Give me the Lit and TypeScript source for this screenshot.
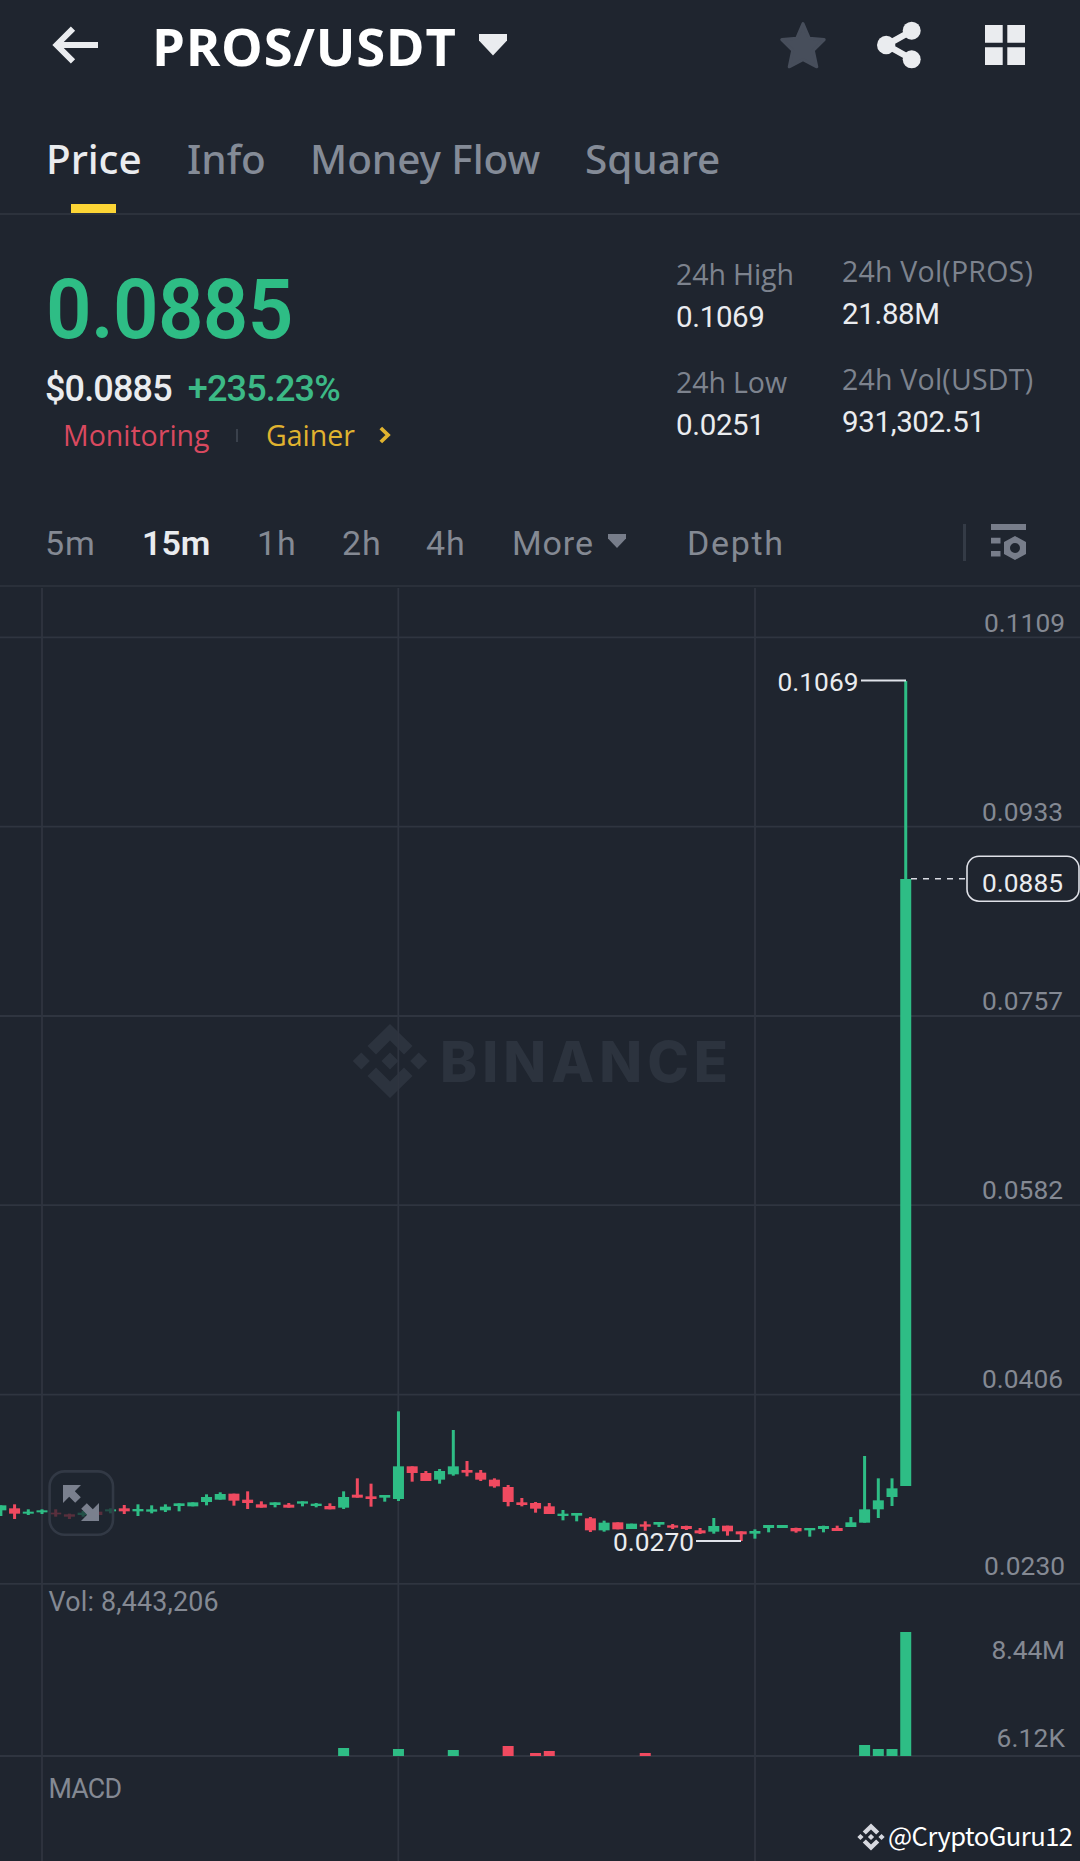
import { LitElement, html, css, svg } from "lit";
import { customElement, property } from "lit/decorators.js";
import { classMap } from "lit/directives/class-map.js";

type Candle = [up: number, high: number, top: number, bottom: number, low: number];

const FIRST_X = 0.87;
const STEP = 13.71;

// Vertical extents in thirds of a pixel below CANDLE_TOP.
const CANDLE_TOP = 1400;
const CANDLES: Candle[] = [
  [1, 316, 316, 331, 348], [0, 313, 325, 341, 357], [1, 328, 335, 341, 345], [1, 328, 331, 337, 342],
  [0, 328, 338, 343, 350], [0, 341, 343, 350, 357], [1, 333, 338, 345, 350], [0, 325, 335, 345, 350],
  [1, 325, 328, 334, 340], [0, 315, 325, 334, 342], [1, 313, 327, 334, 348], [1, 316, 328, 335, 340],
  [1, 313, 320, 331, 336], [1, 310, 310, 318, 334], [1, 307, 307, 319, 319], [1, 283, 291, 306, 316],
  [1, 277, 282, 299, 299], [0, 281, 281, 302, 317], [0, 274, 299, 309, 327], [0, 304, 313, 323, 323],
  [1, 307, 307, 315, 322], [0, 309, 314, 323, 323], [1, 304, 304, 311, 319], [1, 309, 311, 318, 322],
  [0, 310, 318, 328, 328], [1, 274, 291, 323, 327], [0, 235, 284, 293, 293], [0, 251, 289, 297, 320],
  [1, 285, 285, 293, 305], [1, 34, 199, 297, 303], [0, 199, 199, 219, 245], [0, 213, 219, 243, 243],
  [1, 207, 213, 239, 251], [1, 90, 199, 223, 227], [0, 183, 210, 218, 229], [0, 210, 218, 239, 243],
  [0, 235, 239, 259, 263], [0, 255, 261, 306, 319], [0, 294, 307, 315, 319], [0, 306, 309, 326, 338],
  [0, 309, 319, 342, 342], [1, 330, 341, 348, 361], [1, 339, 339, 347, 364], [0, 351, 355, 391, 396],
  [1, 362, 368, 391, 395], [0, 367, 367, 388, 388], [1, 371, 371, 387, 387], [0, 364, 373, 380, 392],
  [1, 366, 366, 374, 381], [0, 372, 376, 383, 387], [0, 377, 378, 387, 390], [0, 384, 391, 400, 402],
  [1, 354, 378, 395, 401], [0, 377, 377, 394, 407], [0, 394, 394, 403, 423], [1, 388, 393, 401, 416],
  [1, 375, 375, 384, 397], [1, 375, 375, 384, 384], [0, 383, 384, 394, 398], [1, 384, 384, 391, 410],
  [1, 377, 378, 387, 397], [0, 377, 384, 393, 393], [1, 351, 367, 381, 381], [1, 168, 328, 368, 368],
  [1, 235, 301, 328, 354], [1, 235, 265, 291, 318], [1, -2157, -1563, 258, 258],
];

// [candle index, height, rising]
const VOLUMES: [number, number, number][] = [
  [25, 8, 1], [29, 7, 1], [33, 6, 1], [37, 10, 0], [39, 3, 0], [40, 5, 0],
  [47, 3, 0], [63, 11, 1], [64, 7, 1], [65, 7, 1], [66, 124, 1],
];
const VOLUME_BASE = 1756;

const AXIS: [string, number, number, number][] = [
  ["0.1109", 985.5, 1063.5, 631.7], ["0.0933", 983.5, 1061.5, 820.7], ["0.0757", 983.5, 1061.5, 1009.7],
  ["0.0582", 983.5, 1061.5, 1198.7], ["0.0406", 983.5, 1061.5, 1388.3], ["0.0230", 985.5, 1063.5, 1574.5],
  ["8.44M", 993, 1063.5, 1658.8], ["6.12K", 998, 1063.5, 1746.8],
];

const label = (text: string, left: number, right: number, y: number, cls = "axis") =>
  svg`<text class=${cls} x=${left - 1.5} y=${y} textLength=${right - left + 3}>${text}</text>`;

const brandMark = (cx: number, cy: number, half: number, cls: string) => svg`
  <g class=${cls} transform="translate(${cx} ${cy}) scale(${half / 37})">
    <path d="M0-37 22.5-15 14-6.5 0-20.5-14-6.5-22.5-15Z M0 37 22.5 15 14 6.5 0 20.5-14 6.5-22.5 15Z
      M0-8.5 8.5 0 0 8.5-8.5 0Z M-28.7-8.5-20.2 0-28.7 8.5-37.2 0Z M28.7-8.5 37.2 0 28.7 8.5 20.2 0Z"/>
  </g>`;

@customElement("price-chart")
export class PriceChart extends LitElement {
  static styles = css`
    :host { display: block; }
    .canvas { display: block; }
    .grid { stroke: #2f3540; stroke-width: 1.8; }
    .axis { fill: #848993; font: 400 26.3px Roboto, sans-serif; }
    .mark { fill: #eaecef; font: 400 26.3px Roboto, sans-serif; }
    .study { fill: #848993; font: 400 26.8px Roboto, sans-serif; }
    .up { fill: #2ebd85; }
    .down { fill: #f04a60; }
    .leader { stroke: #e0e3ea; stroke-width: 2; }
    .dash { stroke: #d9dce3; stroke-width: 1.6; stroke-dasharray: 6 6; }
    .tag { fill: #1f252f; stroke: #dfe1e8; stroke-width: 1.6; }
    .faint { fill: #2c333e; }
    .brand { fill: #2c333e; font: 800 56px Inter, "Open Sans", sans-serif; }
    .veil { fill: #1f252f; fill-opacity: 0.72; stroke: #323945; stroke-width: 2.6; }
    .arrows { fill: #7a808e; }
    .credit-mark { fill: #d6d8df; }
    .credit { fill: #fff; font: 400 25.5px "Noto Sans CJK SC", sans-serif; }
  `;

  private candle([up, high, top, bottom, low]: Candle, i: number) {
    const x = FIRST_X + i * STEP;
    const y = (v: number) => CANDLE_TOP + v / 3;
    return svg`<g class=${up ? "up" : "down"}>
      <rect x=${x - 1.5} y=${y(high)} width="3" height=${(low - high) / 3}></rect>
      <rect x=${x - 5.5} y=${y(top)} width="11" height=${(bottom - top) / 3}></rect>
    </g>`;
  }

  render() {
    return html`<svg class="canvas" width="1080" height="1273" viewBox="0 588 1080 1273">
      ${brandMark(390, 1061, 37, "faint")}
      <text class="brand" x="440" y="1081.5" textLength="288">BINANCE</text>
      ${[637.3, 826.7, 1016, 1205.2, 1394.6, 1583.8, 1756].map(
        (y) => svg`<line class="grid" x1="0" x2="1080" y1=${y} y2=${y}></line>`)}
      ${[42, 398.3, 755].map(
        (x) => svg`<line class="grid" x1=${x} x2=${x} y1="588" y2="1861"></line>`)}
      ${AXIS.map(([t, l, r, y]) => label(t, l, r, y))}
      ${CANDLES.map((c, i) => this.candle(c, i))}
      ${VOLUMES.map(([i, h, up]) => svg`<rect class=${up ? "up" : "down"}
        x=${FIRST_X + i * STEP - 5.5} y=${VOLUME_BASE - h} width="11" height=${h}></rect>`)}
      <line class="leader" x1="861" x2="906" y1="680.5" y2="680.5"/>
      ${label("0.1069", 779, 857, 691, "mark")}
      <line class="leader" x1="696" x2="741" y1="1541" y2="1541"/>
      ${label("0.0270", 614.5, 692.5, 1551, "mark")}
      <line class="dash" x1="911" x2="966" y1="878.8" y2="878.8"/>
      <rect class="tag" x="967" y="856.2" width="112" height="45" rx="12"/>
      ${label("0.0885", 983.5, 1061.5, 891.5, "mark")}
      ${label("Vol: 8,443,206", 50, 217, 1611, "study")}
      ${label("MACD", 50, 120.5, 1798, "study")}
      <rect class="veil" x="49.6" y="1471.4" width="63.4" height="63.4" rx="15"/>
      <path class="arrows" d="M63 1485h18l-6.2 6.2 6 6-5.6 5.6-6-6-6.2 6.2Z M99 1521H81l6.2-6.2-6-6 5.6-5.6 6 6 6.2-6.2Z"/>
      ${brandMark(871, 1837, 13.6, "credit-mark")}
      <text class="credit" x="888" y="1846" textLength="185">@CryptoGuru12</text>
    </svg>`;
  }
}

@customElement("stat-item")
export class StatItem extends LitElement {
  @property() label = "";
  @property() value = "";
  static styles = css`
    :host { display: flex; flex-direction: column; gap: 7px; white-space: nowrap; }
    .label { font: 400 28.5px/36px "Open Sans", sans-serif; color: #7d838e; letter-spacing: var(--label-spacing, -0.1px); }
    .value { font: 400 29.5px/36px Roboto, sans-serif; color: #eaecef; letter-spacing: -0.35px; }
  `;
  render() {
    return html`<span class="label">${this.label}</span><span class="value">${this.value}</span>`;
  }
}

@customElement("app-root")
export class AppRoot extends LitElement {
  static styles = css`
    :host { display: block; width: 1080px; height: 1861px; overflow: hidden; background: #1f252f; color: #eaecef; }
    .header { display: flex; align-items: center; height: 90px; margin-bottom: 1px; }
    .back { margin-left: 52px; margin-right: 54px; }
    .pair { width: 327px; padding-top: 2px; font: 700 52.5px/92px "Open Sans", sans-serif; letter-spacing: 0.75px; color: #fff; white-space: nowrap; }
    .header .tool { margin-right: 50px; }
    .header .star { margin-right: 51px; }
    .spring { flex: 1; }
    .header .last { margin-left: 14px; margin-right: 55px; }
    .tabs { display: grid; grid-template-columns: 141px 123px 275px 200px; padding: 13px 0 0 46px; height: 109px; border-bottom: 2px solid #2c323c; }
    .tab { position: relative; font: 500 40.5px/110px "Noto Sans", sans-serif; color: #848b97; white-space: nowrap; letter-spacing: -0.05px; }
    .tab.active { color: #eaecef; }
    .tab.active::after { content: ""; position: absolute; left: 25px; bottom: 1px; width: 45px; height: 9px; background: #fcd535; }
    .summary { display: flex; justify-content: space-between; height: 290px; }
    .quote { padding: 53px 0 0 46px; white-space: nowrap; }
    .last-price { font: 600 83px/84px Roboto, sans-serif; color: #2ebd85; letter-spacing: -0.7px; transform: scaleX(0.962); transform-origin: left; }
    .change { display: flex; gap: 16px; margin: 17px 0 0 -1px; font: 500 36px/40px Roboto, sans-serif; letter-spacing: -0.85px; }
    .gain { color: #3cb986; }
    .tags { display: flex; align-items: center; margin: 6px 0 0 17px; font: 400 28.5px/40px "Open Sans", sans-serif; }
    .risk { width: 173px; color: #d9495f; }
    .divider { width: 2px; height: 13px; background: #3a414c; }
    .gainer { margin-left: 28px; width: 113px; color: #e0b32f; }
    .stats { display: grid; grid-template-columns: 166px 238px; grid-template-rows: 108px 108px; padding-top: 41px; }
    .shift { margin-top: -3px; --label-spacing: 0.22px; }
    .frames { display: flex; align-items: center; height: 76px; padding-bottom: 4px; border-bottom: 2px solid #2a303a; margin-bottom: 1px; font: 400 34px/77px Roboto, sans-serif; color: #848993; white-space: nowrap; letter-spacing: 0.9px; }
    .f5 { margin-left: 45px; width: 97px; }
    .f15 { width: 115px; font-weight: 600; color: #eaecef; letter-spacing: 0; }
    .f1 { width: 85px; }
    .f2 { width: 84px; }
    .f4 { width: 86px; }
    .more { width: 96px; }
    .depth { margin-left: 61px; width: 276px; letter-spacing: 1.7px; }
    .bar { width: 2.5px; height: 37px; margin: 0 25px 2px 0; background: #343b46; }
    .caret { margin-bottom: 5px; }
    .settings { margin-bottom: 3px; }
    svg { display: block; flex: none; }
  `;

  render() {
    const frames: [string, string][] = [["5m", "f5"], ["15m", "f15"], ["1h", "f1"], ["2h", "f2"], ["4h", "f4"]];
    return html`
      <header class="header">
        <svg class="back" width="46" height="38" viewBox="0 0 46 38" fill="none" stroke="#eaecef" stroke-width="6">
          <path d="M46 19H5M21 2.6 4.6 19 21 35.4"/>
        </svg>
        <span class="pair">PROS/USDT</span>
        <svg width="28" height="22" viewBox="0 0 28 22"><path fill="#eaecef" d="M0 0h28v6.5L14 21.5 0 6.5Z"/></svg>
        <span class="spring"></span>
        <svg class="tool star" width="46" height="48" viewBox="0 0 46 48">
          <path fill="#474e5b" stroke="#474e5b" stroke-width="3" stroke-linejoin="round"
            d="M23 2.6 29.2 17.2 44.2 18.6 33.3 29.4 36.8 45.8 23 38.6 9.2 45.8 12.7 29.4 1.8 18.6 16.8 17.2Z"/>
        </svg>
        <svg class="tool" width="44" height="48" viewBox="0 0 44 48">
          <path d="M34.5 10 9.5 24 34.5 38" fill="none" stroke="#eaecef" stroke-width="6.5"/>
          <g fill="#eaecef"><circle cx="34.7" cy="9.7" r="9"/><circle cx="9.2" cy="24" r="9.2"/><circle cx="34.7" cy="38.3" r="9"/></g>
        </svg>
        <svg class="last" width="40" height="40" viewBox="0 0 40 40">
          <path fill="#eaecef" d="M0 0h17.7v17.8H0ZM22.3 0H40v17.8H22.3ZM0 22.2h17.7V40H0ZM22.3 22.2H40V40H22.3Z"/>
        </svg>
      </header>
      <nav class="tabs">
        ${["Price", "Info", "Money Flow", "Square"].map(
          (t, i) => html`<span class=${classMap({ tab: true, active: i === 0 })}>${t}</span>`)}
      </nav>
      <section class="summary">
        <div class="quote">
          <div class="last-price">0.0885</div>
          <div class="change"><span>$0.0885</span><span class="gain">+235.23%</span></div>
          <div class="tags">
            <span class="risk">Monitoring</span><span class="divider"></span><span class="gainer">Gainer</span>
            <svg width="12" height="18" viewBox="0 0 12 18" fill="none" stroke="#e0b32f" stroke-width="3.8"><path d="M1.8 2 9 9 1.8 16"/></svg>
          </div>
        </div>
        <div class="stats">
          <stat-item label="24h High" value="0.1069"></stat-item>
          <stat-item class="shift" label="24h Vol(PROS)" value="21.88M"></stat-item>
          <stat-item label="24h Low" value="0.0251"></stat-item>
          <stat-item class="shift" label="24h Vol(USDT)" value="931,302.51"></stat-item>
        </div>
      </section>
      <div class="frames">
        ${frames.map(([t, c]) => html`<span class=${c}>${t}</span>`)}
        <span class="more">More</span>
        <svg class="caret" width="18" height="14" viewBox="0 0 18 14"><path fill="#777d8a" d="M0 0h18v4.5L9 14 0 4.5Z"/></svg>
        <span class="depth">Depth</span>
        <span class="bar"></span>
        <svg class="settings" width="36" height="36" viewBox="0 0 36 36" fill="#777d8a">
          <path d="M0 0h35v6H0ZM0 13.8h9.5v5.6H0ZM0 27h9.5v5.6H0Z"/>
          <path fill-rule="evenodd" d="M24 12 35 18V30L24 36 13 30V18ZM24 19a5 5 0 1 0 0 10 5 5 0 0 0 0-10Z"/>
        </svg>
      </div>
      <price-chart></price-chart>
    `;
  }
}
